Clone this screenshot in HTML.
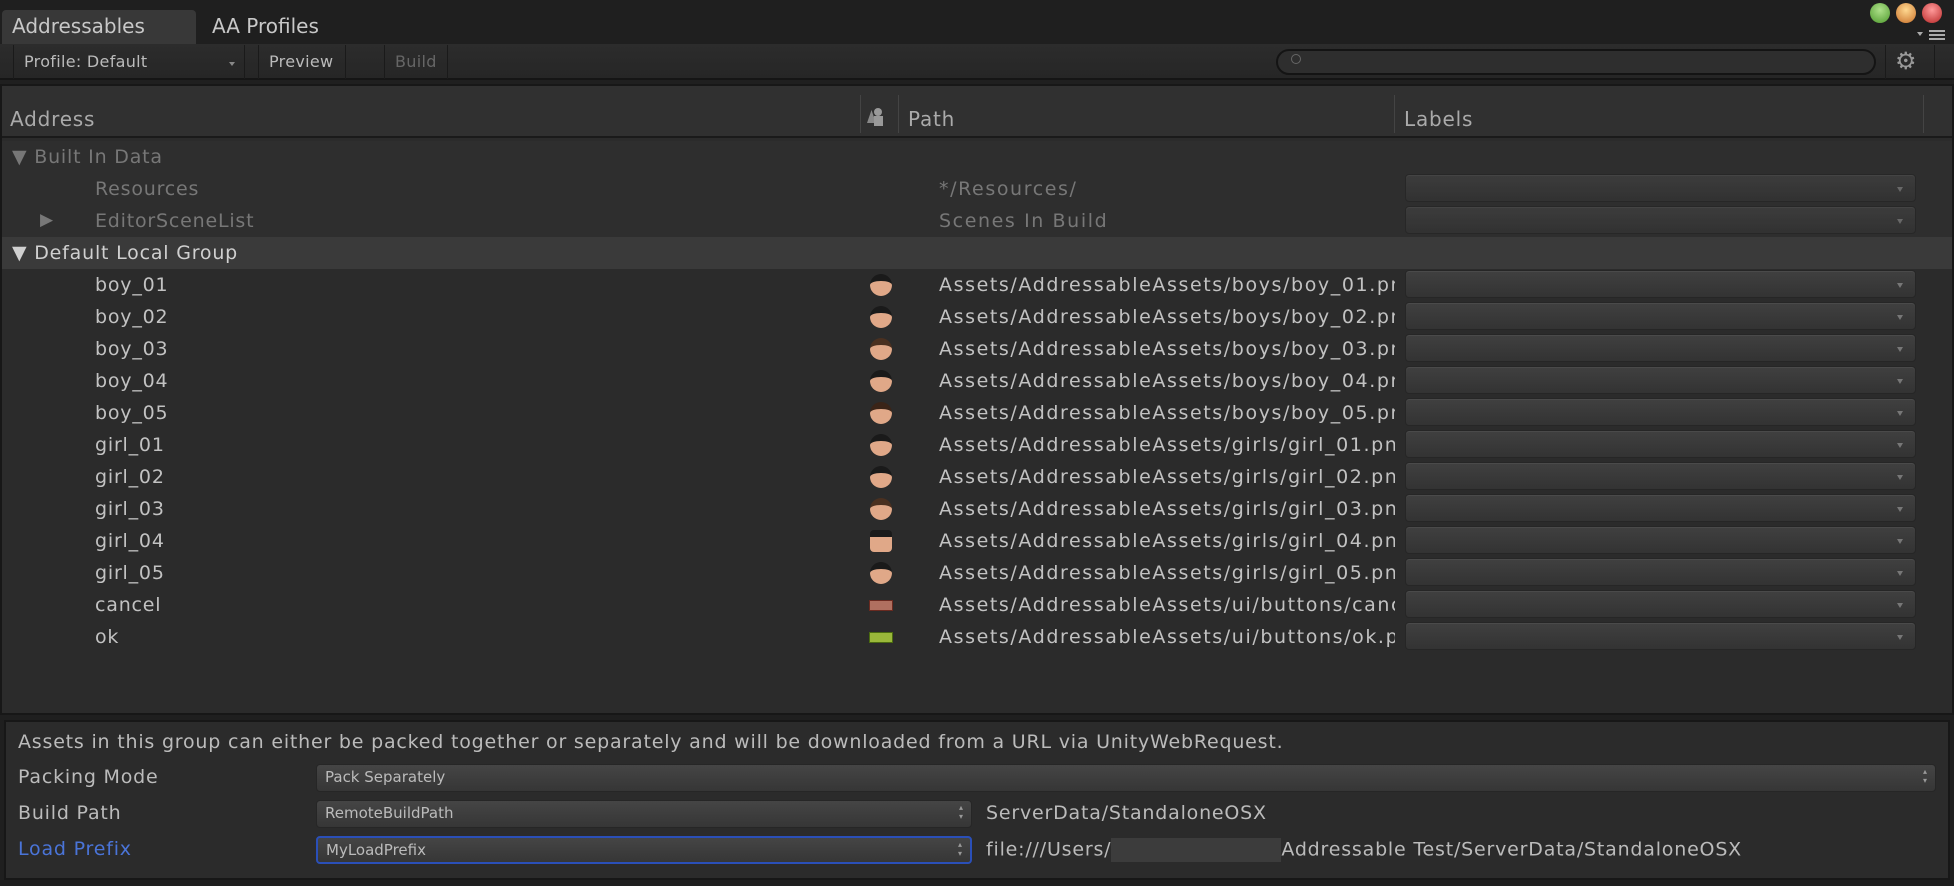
<!DOCTYPE html>
<html><head><meta charset="utf-8"><style>
*{margin:0;padding:0;box-sizing:border-box}
body{width:1954px;height:886px;background:#1f1f1f;overflow:hidden;position:relative;font-family:"DejaVu Sans","Liberation Sans",sans-serif;color:#c2c2c2}
.a{position:absolute}
.t{position:absolute;white-space:nowrap;letter-spacing:0.8px}
.dd{position:absolute;left:1405px;width:511px;height:28px;border-radius:4px;background:linear-gradient(#404040,#333);border:1px solid #262626;box-shadow:inset 0 1px 0 #4a4a4a}
.dd:after{content:"";position:absolute;right:12px;top:12px;border-left:3px solid transparent;border-right:3px solid transparent;border-top:5px solid #777}
.row{position:absolute;left:2px;width:1950px;height:32px}
.nm{position:absolute;left:93px;top:5px;font-size:19px;letter-spacing:0.8px}
.pt{position:absolute;left:937px;top:5px;font-size:19px;width:456px;overflow:hidden;white-space:nowrap;letter-spacing:1.6px}
.ic{position:absolute;left:868px;top:5px;width:22px;height:22px;border-radius:50%;background:#e0a888;border-top:7px solid #1a1a1a}
.pop{position:absolute;left:316px;height:28px;border-radius:4px;background:linear-gradient(#454545,#363636);border:1px solid #262626;font-size:15px;color:#bbb;padding:3px 8px}
.pop:after{content:"▴\A▾";white-space:pre;position:absolute;right:8px;top:2px;font-size:8px;line-height:9px;color:#999}
</style></head><body>
<div class="a" style="left:2px;top:10px;width:194px;height:34px;background:#383838;border-radius:4px 4px 0 0"></div>
<div class="t" style="left:12px;top:14px;font-size:20px;color:#c8c8c8;letter-spacing:0">Addressables</div>
<div class="t" style="left:212px;top:14px;font-size:20px;color:#c8c8c8;letter-spacing:0">AA Profiles</div>
<div class="a" style="left:1870px;top:3px;width:20px;height:20px;border-radius:50%;background:radial-gradient(circle at 50% 35%,#aee08a,#4f9a2e)"></div>
<div class="a" style="left:1896px;top:3px;width:20px;height:20px;border-radius:50%;background:radial-gradient(circle at 50% 35%,#ffd890,#c8702a)"></div>
<div class="a" style="left:1922px;top:3px;width:20px;height:20px;border-radius:50%;background:radial-gradient(circle at 50% 35%,#ff9a9a,#b82828)"></div>
<div class="a" style="left:1929px;top:30px;width:16px;height:2px;background:#aaa;box-shadow:0 4px 0 #aaa,0 8px 0 #aaa"></div>
<div class="a" style="left:1917px;top:32px;border-left:3px solid transparent;border-right:3px solid transparent;border-top:4px solid #aaa"></div>
<div class="a" style="left:0;top:44px;width:1954px;height:36px;background:linear-gradient(#2c2c2c,#262626);border-bottom:2px solid #151515"></div>
<div class="a" style="left:13px;top:45px;width:232px;height:34px;border-left:1px solid #1a1a1a;border-right:1px solid #1a1a1a"></div>
<div class="t" style="left:24px;top:52px;font-size:16px;color:#bbb;letter-spacing:0.3px">Profile: Default</div>
<div class="a" style="left:229px;top:62px;border-left:3px solid transparent;border-right:3px solid transparent;border-top:4px solid #888"></div>
<div class="a" style="left:258px;top:45px;width:88px;height:34px;border-left:1px solid #1a1a1a;border-right:1px solid #1a1a1a"></div>
<div class="t" style="left:269px;top:52px;font-size:16px;color:#bbb;letter-spacing:0.3px">Preview</div>
<div class="a" style="left:384px;top:45px;width:64px;height:34px;border-left:1px solid #1a1a1a;border-right:1px solid #1a1a1a"></div>
<div class="t" style="left:395px;top:52px;font-size:16px;color:#666;letter-spacing:0.3px">Build</div>
<div class="a" style="left:1276px;top:49px;width:600px;height:26px;border-radius:13px;background:#2e2e2e;border:2px solid #141414"></div>
<div class="a" style="left:1291px;top:54px;width:10px;height:10px;border-radius:50%;border:1.5px solid #666"></div>
<div class="a" style="left:1885px;top:45px;width:50px;height:34px;border-left:1px solid #1a1a1a;border-right:1px solid #1a1a1a"></div>
<div class="t" style="left:1895px;top:47px;font-size:24px;color:#999">⚙</div>
<div class="a" style="left:0;top:84px;width:1954px;height:631px;background:#2b2b2b;border:2px solid #171717"></div>
<div class="a" style="left:2px;top:86px;width:1950px;height:52px;background:#303030;border-bottom:2px solid #1a1a1a"></div>
<div class="t" style="left:10px;top:107px;font-size:20px;color:#aaa">Address</div>
<div class="a" style="left:860px;top:95px;width:1px;height:38px;background:#444"></div>
<div class="a" style="left:898px;top:95px;width:1px;height:38px;background:#444"></div>
<div class="a" style="left:1394px;top:95px;width:1px;height:38px;background:#444"></div>
<div class="a" style="left:1923px;top:95px;width:1px;height:38px;background:#444"></div>
<div class="a" style="left:867px;top:110px;width:9px;height:13px;background:#888;clip-path:polygon(50% 0,100% 100%,0 100%)"></div>
<div class="a" style="left:874px;top:108px;width:8px;height:8px;border-radius:50%;background:#999"></div>
<div class="a" style="left:874px;top:116px;width:9px;height:10px;background:#999"></div>
<div class="t" style="left:908px;top:107px;font-size:20px;color:#aaa">Path</div>
<div class="t" style="left:1404px;top:107px;font-size:20px;color:#aaa">Labels</div>

<div class="row" style="top:141px;background:#2e2e2e"><div class="t" style="left:10px;top:5px;font-size:19px;color:#777">▼ Built In Data</div></div>
<div class="row" style="top:173px;background:#2e2e2e"><div class="nm" style="color:#777">Resources</div><div class="pt" style="color:#777">*/Resources/</div></div>
<div class="dd" style="top:174px;opacity:.8"></div>
<div class="row" style="top:205px;background:#2e2e2e"><div class="t" style="left:38px;top:5px;font-size:17px;color:#777">▶</div><div class="nm" style="color:#777">EditorSceneList</div><div class="pt" style="color:#777">Scenes In Build</div></div>
<div class="dd" style="top:206px;opacity:.8"></div>
<div class="row" style="top:237px;background:#3a3a3a"><div class="t" style="left:10px;top:5px;font-size:19px;color:#d0d0d0">▼ Default Local Group</div></div>

<div class="row" style="top:269px"><div class="nm">boy_01</div><div class="ic"></div><div class="pt">Assets/AddressableAssets/boys/boy_01.png</div></div><div class="dd" style="top:270px"></div>
<div class="row" style="top:301px"><div class="nm">boy_02</div><div class="ic"></div><div class="pt">Assets/AddressableAssets/boys/boy_02.png</div></div><div class="dd" style="top:302px"></div>
<div class="row" style="top:333px"><div class="nm">boy_03</div><div class="ic" style="border-top-color:#4a3020"></div><div class="pt">Assets/AddressableAssets/boys/boy_03.png</div></div><div class="dd" style="top:334px"></div>
<div class="row" style="top:365px"><div class="nm">boy_04</div><div class="ic"></div><div class="pt">Assets/AddressableAssets/boys/boy_04.png</div></div><div class="dd" style="top:366px"></div>
<div class="row" style="top:397px"><div class="nm">boy_05</div><div class="ic" style="border-top-color:#3a2418"></div><div class="pt">Assets/AddressableAssets/boys/boy_05.png</div></div><div class="dd" style="top:398px"></div>
<div class="row" style="top:429px"><div class="nm">girl_01</div><div class="ic"></div><div class="pt">Assets/AddressableAssets/girls/girl_01.png</div></div><div class="dd" style="top:430px"></div>
<div class="row" style="top:461px"><div class="nm">girl_02</div><div class="ic"></div><div class="pt">Assets/AddressableAssets/girls/girl_02.png</div></div><div class="dd" style="top:462px"></div>
<div class="row" style="top:493px"><div class="nm">girl_03</div><div class="ic" style="border-top-color:#4a3020"></div><div class="pt">Assets/AddressableAssets/girls/girl_03.png</div></div><div class="dd" style="top:494px"></div>
<div class="row" style="top:525px"><div class="nm">girl_04</div><div class="ic" style="border-radius:4px"></div><div class="pt">Assets/AddressableAssets/girls/girl_04.png</div></div><div class="dd" style="top:526px"></div>
<div class="row" style="top:557px"><div class="nm">girl_05</div><div class="ic"></div><div class="pt">Assets/AddressableAssets/girls/girl_05.png</div></div><div class="dd" style="top:558px"></div>
<div class="row" style="top:589px"><div class="nm">cancel</div><div class="a" style="left:867px;top:11px;width:24px;height:11px;background:#b07060;border:1px solid #6a2a20"></div><div class="pt">Assets/AddressableAssets/ui/buttons/cancel.png</div></div><div class="dd" style="top:590px"></div>
<div class="row" style="top:621px"><div class="nm">ok</div><div class="a" style="left:867px;top:11px;width:24px;height:11px;background:#9ab83a;border:1px solid #4a6a10"></div><div class="pt">Assets/AddressableAssets/ui/buttons/ok.png</div></div><div class="dd" style="top:622px"></div>

<div class="a" style="left:4px;top:720px;width:1946px;height:160px;background:#2b2b2b;border:2px solid #171717"></div>
<div class="t" style="left:18px;top:731px;font-size:19px;color:#bbb">Assets in this group can either be packed together or separately and will be downloaded from a URL via UnityWebRequest.</div>
<div class="t" style="left:18px;top:766px;font-size:19px;color:#bbb">Packing Mode</div>
<div class="pop" style="top:764px;width:1620px">Pack Separately</div>
<div class="t" style="left:18px;top:802px;font-size:19px;color:#bbb">Build Path</div>
<div class="pop" style="top:800px;width:656px">RemoteBuildPath</div>
<div class="t" style="left:986px;top:802px;font-size:19px;color:#bbb">ServerData/StandaloneOSX</div>
<div class="t" style="left:18px;top:838px;font-size:19px;color:#4a74d8">Load Prefix</div>
<div class="pop" style="top:836px;width:656px;border:2px solid #2a4fb8">MyLoadPrefix</div>
<div class="t" style="left:986px;top:838px;font-size:19px;color:#bbb">file:///Users/<span style="display:inline-block;width:170px;height:24px;background:#3c3c3c;vertical-align:middle"></span>Addressable Test/ServerData/StandaloneOSX</div>
</body></html>
